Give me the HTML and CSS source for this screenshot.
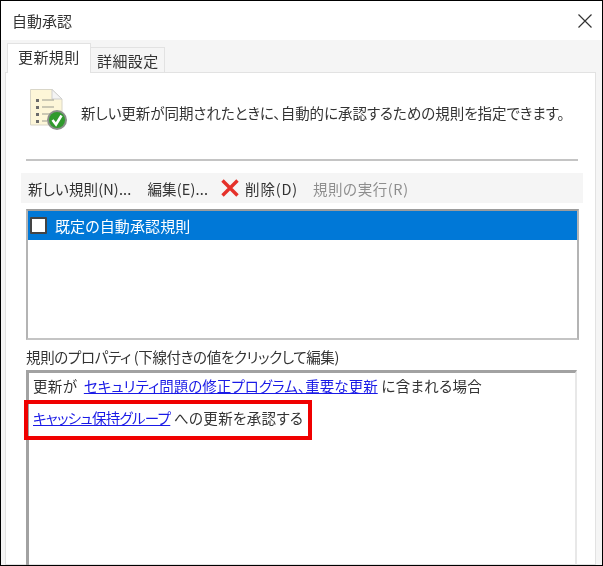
FILE: index.html
```html
<!DOCTYPE html>
<html lang="ja">
<head>
  <meta charset="UTF-8">
  <title>自動承認</title>
  <link rel="stylesheet" href="styles.css">
</head>
<body>
  <div class="dialog">
    <header class="titlebar">
      <span class="title">自動承認</span>
      <svg class="close" width="16" height="16" viewBox="0 0 16 16"><path d="M1.5 1.5L14.5 14.5M14.5 1.5L1.5 14.5" stroke="#333" stroke-width="1.2" fill="none"/></svg>
    </header>
    <div class="content">
      <div class="tabs">
        <div class="tab active">更新規則</div>
        <div class="tab">詳細設定</div>
      </div>
      <div class="panel">
        <div class="intro">
          <svg class="intro-icon" width="38" height="44" viewBox="0 0 38 44">
            <path d="M1.5 1.5H23L33 11V37H1.5Z" fill="#fdf6d8" stroke="#d9d6c8"/>
            <path d="M23 1.5V11H33Z" fill="#f4f4f4" stroke="#cfcfcf"/>
            <g fill="#6b6b6b">
              <rect x="7" y="11" width="3" height="3"/>
              <rect x="7" y="18" width="3" height="3"/>
              <rect x="7" y="25" width="3" height="3"/>
              <rect x="7" y="32" width="3" height="3"/>
            </g>
            <g stroke="#9a9a90" stroke-width="1.2">
              <path d="M13 12H25M13 19H25M13 26H22M13 33H18"/>
            </g>
            <circle cx="28" cy="32" r="10" fill="#8a8f8a"/>
            <circle cx="28" cy="32" r="8" fill="#2f9a2c"/>
            <path d="M23.5 32L27 36.5L32.5 27.5" stroke="#fff" stroke-width="2.6" fill="none"/>
          </svg>
          <p class="intro-text">新しい更新が同期されたときに、自動的に承認するための規則を指定できます。</p>
        </div>
        <hr class="separator">
        <div class="toolbar">
          <span class="tool first">新しい規則(N)...</span>
          <span class="tool">編集(E)...</span>
          <svg class="delete-icon" width="20" height="20" viewBox="0 0 20 20"><path d="M2.5 2.5L17.5 17.5M17.5 2.5L2.5 17.5" stroke="#e5312a" stroke-width="3.4" fill="none"/></svg>
          <span class="tool delete">削除(D)</span>
          <span class="tool disabled">規則の実行(R)</span>
        </div>
        <div class="rule-list">
          <div class="rule-row selected">
            <span class="checkbox"></span>
            <span class="rule-name">既定の自動承認規則</span>
          </div>
        </div>
        <div class="props-label">規則のプロパティ (下線付きの値をクリックして編集)</div>
        <div class="props-box">
          <p class="props-line">更新が <a class="link">セキュリティ問題の修正プログラム、重要な更新</a> に含まれる場合</p>
          <p class="props-line marked">
            <a class="link short">キャッシュ保持グループ</a> への更新を承認する
            <span class="red-box"></span>
          </p>
        </div>
      </div>
    </div>
  </div>
</body>
</html>
```

FILE: styles.css
```css
html, body {
  margin: 0;
  padding: 0;
}
body {
  font-family: "Noto Sans CJK JP", "Noto Sans", sans-serif;
  font-size: 14.5px;
  color: #333;
  font-feature-settings: "palt";
}
.dialog {
  width: 603px;
  height: 566px;
  box-sizing: border-box;
  border: 1px solid #000;
  display: flex;
  flex-direction: column;
  overflow: hidden;
  background-color: #fff;
}
.titlebar {
  height: 39px;
  flex: none;
  display: flex;
  align-items: center;
  justify-content: space-between;
  padding: 0 9px 0 11px;
}
.title {
  font-size: 15px;
  margin-top: -1px;
  filter: blur(0.35px);
}
.content {
  flex: 1;
  background-color: #f5f5f5;
  padding: 3px 6px 0 4px;
  min-height: 0;
  display: flex;
  flex-direction: column;
  filter: blur(0.35px);
}
.tabs {
  display: flex;
  align-items: flex-end;
  height: 30px;
  flex: none;
  margin-bottom: -1px;
  position: relative;
}
.tab {
  height: 26px;
  padding: 0 5px 0 6px;
  box-sizing: border-box;
  border: 1px solid #e2e2e2;
  border-left: none;
  border-bottom: none;
  font-size: 15px;
  line-height: 26px;
  letter-spacing: 0.4px;
}
.tab.active {
  height: 30px;
  width: 84px;
  padding: 0 0 0 10px;
  border-left: 1px solid #e2e2e2;
  background-color: #fff;
  margin-left: 2px;
}
.panel {
  flex: 1;
  min-height: 0;
  background-color: #fff;
  border: 1px solid #e2e2e2;
  padding: 0 16px 0 20px;
}
.intro {
  display: flex;
  align-items: center;
  height: 58px;
  margin-top: 14px;
}
.intro-icon {
  flex: none;
  margin: -12px 0 0 3px;
}
.intro-text {
  margin: -8px 0 0 14px;
  white-space: nowrap;
  letter-spacing: -0.03px;
}
.separator {
  border: none;
  border-top: 2px solid #c4c4c4;
  margin: 14px 1px 0 0;
}
.toolbar {
  display: flex;
  align-items: center;
  height: 30px;
  margin: 12px -4px 0 -5px;
  padding-left: 7px;
  background-color: #f5f5f5;
}
.tool {
  white-space: nowrap;
  letter-spacing: 0.15px;
}
.tool.first {
  margin-right: 16px;
}
.delete-icon {
  margin-left: 12px;
  margin-right: 5px;
}
.tool.delete {
  letter-spacing: 0.8px;
}
.tool.disabled {
  color: #8e8e8e;
  margin-left: 15px;
  letter-spacing: 0.6px;
}
.rule-list {
  height: 127px;
  margin-top: 6px;
  border: 2px solid #b4b4b4;
  border-top-color: #9c9c9c;
  border-bottom-color: #c4c4c4;
  background-color: #fff;
}
.rule-row {
  display: flex;
  align-items: center;
  height: 29px;
  padding-left: 2px;
}
.rule-row.selected {
  background-color: #0078d7;
  color: #fff;
}
.rule-name {
  font-size: 15px;
  letter-spacing: 0.1px;
}
.checkbox {
  width: 13px;
  height: 13px;
  border: 2px solid #444;
  background-color: #fff;
  margin-right: 8px;
  border-radius: 1px;
}
.props-label {
  margin-top: 6px;
  height: 24px;
  line-height: 22px;
  white-space: nowrap;
  letter-spacing: -0.35px;
}
.props-box {
  height: 300px;
  margin-right: 2px;
  border: solid #a2a2a2;
  border-width: 3px 2px 0 3px;
  border-right-color: #e8e8e8;
  padding: 0 0 0 4px;
}
.props-line {
  margin: 0;
  height: 32px;
  line-height: 26px;
  white-space: nowrap;
  position: relative;
  letter-spacing: 0.35px;
}
.link {
  color: #1a1ae6;
  text-decoration: underline;
  margin-left: 3px;
  letter-spacing: 0.05px;
}
.link.short {
  margin-left: 0;
  letter-spacing: -0.7px;
}
.red-box {
  position: absolute;
  left: -9px;
  top: -5px;
  width: 288px;
  height: 40px;
  box-sizing: border-box;
  border: 4px solid #f00000;
}
```
